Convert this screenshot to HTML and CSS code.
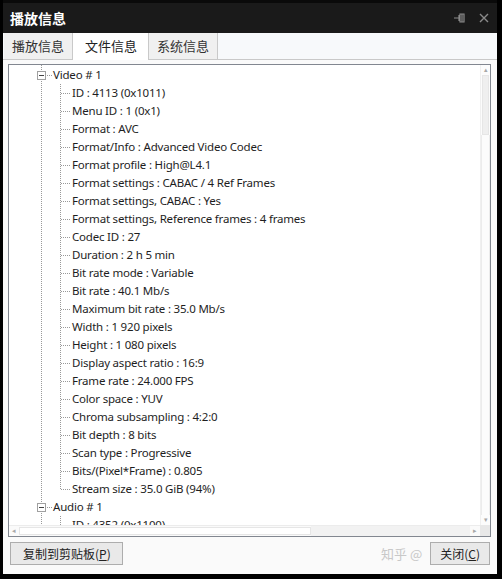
FILE: index.html
```html
<!DOCTYPE html>
<html lang="zh">

<head>
    <meta charset="UTF-8">
    <title>播放信息</title>
    <link rel="stylesheet" href="styles.css">
</head>

<body>
    <div class="window">
        <div class="titlebar">
            <span class="title">播放信息</span>
            <div class="tools">
                <svg width="12" height="10" viewBox="0 0 12 10">
                    <path d="M0 5h5M5 2v6M6 1h4v8H6z M8 1v8" stroke="#8a8a8a" stroke-width="1.2" fill="none"/>
                </svg>
                <svg width="10" height="10" viewBox="0 0 10 10">
                    <path d="M1 1l8 8M9 1l-8 8" stroke="#8a8a8a" stroke-width="1.4"/>
                </svg>
            </div>
        </div>
        <div class="tabs">
            <div class="tab">播放信息</div>
            <div class="tab active">文件信息</div>
            <div class="tab">系统信息</div>
        </div>
        <div class="content">
            <div class="panel">
                <div class="view">
                    <div class="tree">
                        <div class="node">
                            <div class="head"><span class="box"></span>Video # 1</div>
                            <ul class="items">
                                <li>ID : 4113 (0x1011)</li>
                                <li>Menu ID : 1 (0x1)</li>
                                <li>Format : AVC</li>
                                <li>Format/Info : Advanced Video Codec</li>
                                <li>Format profile : High@L4.1</li>
                                <li>Format settings : CABAC / 4 Ref Frames</li>
                                <li>Format settings, CABAC : Yes</li>
                                <li>Format settings, Reference frames : 4 frames</li>
                                <li>Codec ID : 27</li>
                                <li>Duration : 2 h 5 min</li>
                                <li>Bit rate mode : Variable</li>
                                <li>Bit rate : 40.1 Mb/s</li>
                                <li>Maximum bit rate : 35.0 Mb/s</li>
                                <li>Width : 1 920 pixels</li>
                                <li>Height : 1 080 pixels</li>
                                <li>Display aspect ratio : 16:9</li>
                                <li>Frame rate : 24.000 FPS</li>
                                <li>Color space : YUV</li>
                                <li>Chroma subsampling : 4:2:0</li>
                                <li>Bit depth : 8 bits</li>
                                <li>Scan type : Progressive</li>
                                <li>Bits/(Pixel*Frame) : 0.805</li>
                                <li class="last">Stream size : 35.0 GiB (94%)</li>
                            </ul>
                        </div>
                        <div class="node">
                            <div class="head"><span class="box"></span>Audio # 1</div>
                            <ul class="items">
                                <li>ID : 4352 (0x1100)</li>
                                <li>Menu ID : 1 (0x1)</li>
                            </ul>
                        </div>
                    </div>
                </div>
                <div class="vscroll">
                    <span class="arrow">&#9652;</span>
                    <div class="vthumb"></div>
                    <div class="vtrack"></div>
                    <span class="arrow">&#9662;</span>
                </div>
                <div class="hscroll">
                    <span class="arrow">&#9666;</span>
                    <div class="hthumb"></div>
                    <div class="htrack"></div>
                    <span class="arrow">&#9656;</span>
                </div>
                <div class="corner"></div>
            </div>
            <div class="footer">
                <button class="btn copy">复制到剪贴板(<u>P</u>)</button>
                <div class="right">
                    <span class="mark">知乎 @</span>
                    <button class="btn">关闭(<u>C</u>)</button>
                </div>
            </div>
        </div>
    </div>
</body>

</html>
```

FILE: styles.css
```css
* {
    margin: 0;
    padding: 0;
    box-sizing: border-box;
}

body {
    background-color: #000;
    width: 502px;
    height: 579px;
    overflow: hidden;
    font-family: "Noto Sans", "Noto Sans CJK SC", sans-serif;
}

.window {
    margin-left: 3px;
    width: 494px;
    height: 574px;
    display: flex;
    flex-direction: column;
    background-color: #f0f0f0;
}

.titlebar {
    height: 33px;
    background-color: #1a1a1a;
    border-top: 3px solid #0a0a0a;
    display: flex;
    align-items: center;
    justify-content: space-between;
    padding: 0 8px 0 7px;
}

.title {
    color: #fff;
    font-weight: bold;
    font-size: 14px;
    font-family: "Noto Sans CJK SC", sans-serif;
}

.tools {
    display: flex;
    gap: 13px;
    align-items: center;
}

.tabs {
    height: 27px;
    display: flex;
    padding-left: 1px;
    background-color: #f7f9fb;
    border-bottom: 1px solid #c9c9c9;
    font-family: "Noto Sans CJK SC", sans-serif;
    font-size: 13px;
    color: #333;
}

.tab {
    padding: 0 8px;
    line-height: 26px;
    border-right: 1px solid #c9c9c9;
    background-color: #f0f0f0;
}

.tab.active {
    background-color: #fff;
    margin-bottom: -1px;
    padding: 0 11px 0 12px;
    color: #222;
}

.content {
    flex: 1;
    display: flex;
    flex-direction: column;
    padding: 4px 6px 4px 5px;
    background-color: #fafafa;
}

.panel {
    height: 473px;
    border: 1px solid #828790;
    background-color: #fff;
    display: grid;
    grid-template-columns: 1fr 10px;
    grid-template-rows: 1fr 11px;
}

.view {
    overflow: hidden;
}

.tree {
    padding-top: 1px;
    padding-left: 32px;
    font-size: 11.5px;
    letter-spacing: -0.2px;
    color: #1e1e1e;
    background-image: linear-gradient(#999 50%, transparent 50%);
    background-size: 1px 2px;
    background-repeat: repeat-y;
    background-position: 32px 0;
}

.head {
    height: 18px;
    line-height: 18px;
    position: relative;
    padding-left: 12px;
}

.box {
    position: absolute;
    left: -4px;
    top: 5px;
    width: 9px;
    height: 9px;
    border: 1px solid #a0a0a0;
    background-color: #fff;
}

.box::after {
    content: "";
    position: absolute;
    left: 1px;
    top: 3px;
    width: 5px;
    height: 1px;
    background-color: #444;
}

.head::before {
    content: "";
    position: absolute;
    left: 6px;
    top: 9px;
    width: 5px;
    border-top: 1px dotted #999;
}

.items {
    list-style: none;
    margin-left: 19px;
    background-image: linear-gradient(#999 50%, transparent 50%);
    background-size: 1px 2px;
    background-repeat: repeat-y;
}

.items li {
    height: 18px;
    line-height: 18px;
    padding-left: 12px;
    position: relative;
    white-space: nowrap;
}

.items li::before {
    content: "";
    position: absolute;
    left: 1px;
    top: 9px;
    width: 9px;
    border-top: 1px dotted #999;
}

.items li.last::after {
    content: "";
    position: absolute;
    left: 0;
    top: 10px;
    width: 1px;
    height: 8px;
    background-color: #fff;
}

.vscroll {
    background-color: #fcfcfc;
    border-left: 1px solid #f0f0f0;
    display: flex;
    flex-direction: column;
    align-items: stretch;
}

.vthumb {
    height: 60px;
    margin: 0 1px;
    background-color: #efefef;
    border: 1px solid #e6e6e6;
}

.vtrack {
    flex: 1;
    border-left: 1px solid #ececec;
    border-right: 1px solid #ececec;
}

.hscroll {
    background-color: #fafafa;
    border-top: 1px solid #ececec;
    display: flex;
    align-items: stretch;
}

.hthumb {
    width: 292px;
    margin: 1px 0;
    background-color: #fff;
    border: 1px solid #e6e6e6;
}

.htrack {
    flex: 1;
    background-color: #f2f2f2;
}

.arrow {
    font-size: 7px;
    color: #a8a8a8;
    text-align: center;
    line-height: 10px;
    width: 10px;
    height: 10px;
}

.corner {
    background-color: #e8e8e8;
}

.footer {
    flex: 1;
    display: flex;
    align-items: center;
    justify-content: space-between;
    padding: 0 1px 0 2px;
}

.right {
    display: flex;
    align-items: center;
    gap: 8px;
}

.mark {
    color: #c8c8c8;
    font-size: 13px;
    font-family: "Noto Sans CJK SC", sans-serif;
}

.btn {
    height: 23px;
    padding: 0 9px;
    border: 1px solid #adadad;
    background-color: #e9e9e9;
    font-family: "Noto Sans CJK SC", sans-serif;
    font-size: 12px;
    color: #222;
}

.btn.copy {
    padding: 0 11px 0 12px;
}
```
